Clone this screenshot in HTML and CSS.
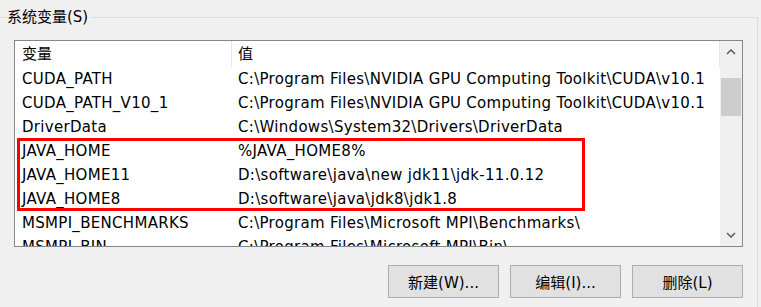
FILE: index.html
```html
<!DOCTYPE html>
<html lang="zh-CN">
<head>
<meta charset="utf-8">
<link rel="stylesheet" href="styles.css">
</head>
<body>
<fieldset class="group">
  <legend class="group-label">系统变量(S)</legend>
  <div class="listbox">
    <div class="list">
      <div class="row header">
        <div class="cell name">变量</div>
        <div class="cell value">值</div>
      </div>
      <div class="row"><div class="cell name">CUDA_PATH</div><div class="cell value">C:\Program Files\NVIDIA GPU Computing Toolkit\CUDA\v10.1</div></div>
      <div class="row"><div class="cell name">CUDA_PATH_V10_1</div><div class="cell value">C:\Program Files\NVIDIA GPU Computing Toolkit\CUDA\v10.1</div></div>
      <div class="row"><div class="cell name">DriverData</div><div class="cell value">C:\Windows\System32\Drivers\DriverData</div></div>
      <div class="row"><div class="cell name">JAVA_HOME</div><div class="cell value">%JAVA_HOME8%</div></div>
      <div class="row"><div class="cell name">JAVA_HOME11</div><div class="cell value">D:\software\java\new jdk11\jdk-11.0.12</div></div>
      <div class="row"><div class="cell name">JAVA_HOME8</div><div class="cell value">D:\software\java\jdk8\jdk1.8</div></div>
      <div class="row"><div class="cell name">MSMPI_BENCHMARKS</div><div class="cell value">C:\Program Files\Microsoft MPI\Benchmarks\</div></div>
      <div class="row"><div class="cell name">MSMPI_BIN</div><div class="cell value">C:\Program Files\Microsoft MPI\Bin\</div></div>
      <div class="highlight"></div>
    </div>
    <div class="scrollbar">
      <div class="sb-btn">
        <svg width="10" height="6" viewBox="0 0 10 6"><path d="M1 5 L5 1 L9 5" fill="none" stroke="#606060" stroke-width="1.6"/></svg>
      </div>
      <div class="sb-track">
        <div class="sb-thumb"></div>
      </div>
      <div class="sb-btn">
        <svg width="10" height="6" viewBox="0 0 10 6"><path d="M1 1 L5 5 L9 1" fill="none" stroke="#606060" stroke-width="1.6"/></svg>
      </div>
    </div>
  </div>
  <div class="buttons">
    <button class="btn">新建(W)...</button>
    <button class="btn">编辑(I)...</button>
    <button class="btn">删除(L)</button>
  </div>
</fieldset>
</body>
</html>
```
FILE: styles.css
```css
html, body {
  margin: 0;
  padding: 0;
  background: #f0f0f0;
  overflow: hidden;
}
body {
  width: 761px;
  height: 307px;
  font-family: "DejaVu Sans", "Noto Sans CJK SC", sans-serif;
  font-size: 15px;
  letter-spacing: 0.3px;
  color: #000;
}
.group {
  margin: 7px 0 0 0;
  padding: 0 0 0 14px;
  width: 758px;
  height: 300px;
  box-sizing: border-box;
  border: none;
  border-top: 1px solid #dcdcdc;
  border-right: 1px solid #dcdcdc;
  min-width: 0;
}
.group-label {
  padding: 0 3px 0 0;
  margin-left: -7px;
  line-height: 20px;
  height: 20px;
  font-size: 15px;
  letter-spacing: 0;
  color: #000;
}
.listbox {
  margin-top: 13px;
  width: 729px;
  height: 207px;
  box-sizing: border-box;
  border: 1px solid #828790;
  background: #fff;
  display: flex;
}
.list {
  position: relative;
  flex: 1;
  overflow: hidden;
}
.row {
  display: flex;
  height: 24px;
  align-items: center;
  white-space: nowrap;
}
.row.header {
  height: 26px;
}
.cell.name {
  width: 217px;
  padding-left: 7px;
  box-sizing: border-box;
  flex: none;
}
.cell.value {
  padding-left: 6px;
}
.header .cell {
  letter-spacing: 0;
}
.header .cell.name {
  border-right: 1px solid #e5e5e5;
  height: 26px;
  line-height: 26px;
}
.header .cell.value {
  flex: 1;
  border-right: 1px solid #e5e5e5;
  height: 26px;
  line-height: 26px;
}
.highlight {
  position: absolute;
  left: 2px;
  top: 97px;
  width: 568px;
  height: 73px;
  box-sizing: border-box;
  border: 3px solid #ff0000;
}
.scrollbar {
  width: 22px;
  flex: none;
  background: #f0f0f0;
  display: flex;
  flex-direction: column;
}
.sb-btn {
  height: 22px;
  display: flex;
  align-items: center;
  justify-content: center;
  flex: none;
}
.sb-track {
  flex: 1;
  padding: 15px 1px 0 1px;
}
.sb-thumb {
  height: 38px;
  background: #cdcdcd;
}
.buttons {
  display: flex;
  justify-content: flex-end;
  gap: 11px;
  width: 729px;
  margin-top: 18px;
}
.btn {
  width: 111px;
  height: 33px;
  box-sizing: border-box;
  border: 1px solid #adadad;
  background: #e1e1e1;
  font-family: inherit;
  font-size: 15px;
  letter-spacing: 0;
  color: #000;
  padding: 0;
  margin: 0;
}
```
